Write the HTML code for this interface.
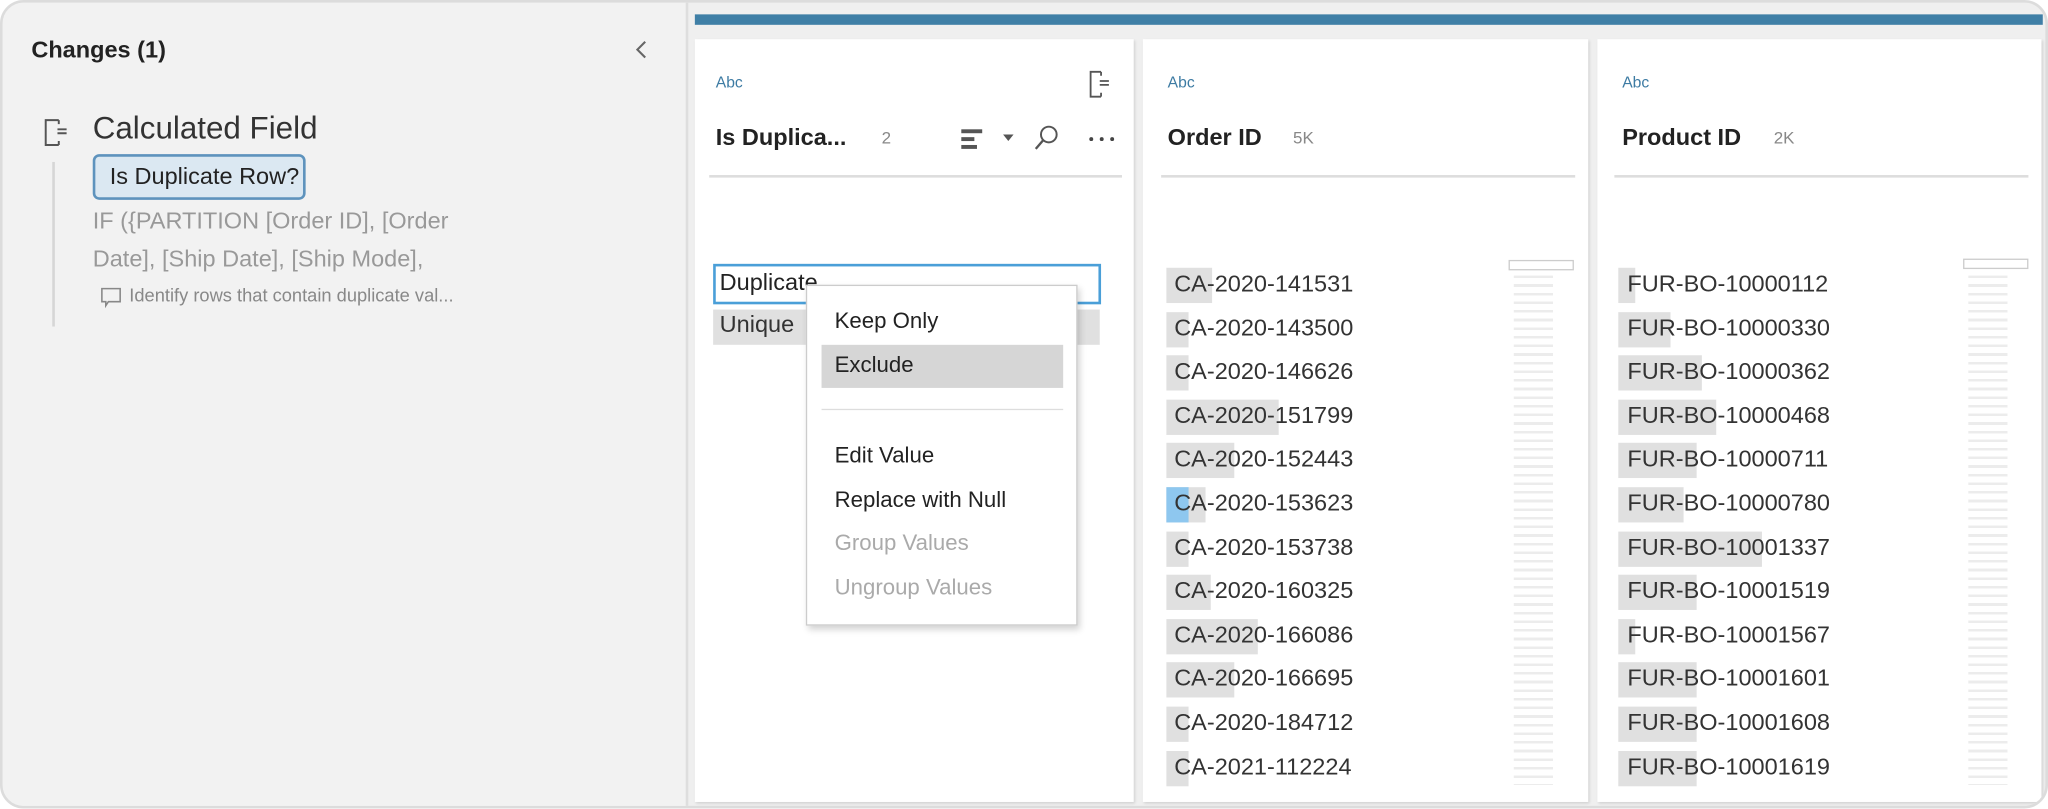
<!DOCTYPE html>
<html><head><meta charset="utf-8"><style>
*{margin:0;padding:0;box-sizing:border-box}
body{width:2048px;height:808px;overflow:hidden;background:#fff;font-family:"Liberation Sans Narrow","Liberation Sans",sans-serif}
#w{position:absolute;left:0;top:0;width:1568px;height:619px;transform:scale(1.30612);transform-origin:0 0}
.a{position:absolute}
#frame{left:0;top:0;width:1568px;height:619px;border:2px solid #dcdcdc;border-radius:18px;overflow:hidden;background:#efefef}
#left{left:0;top:0;width:525px;height:619px;background:#f2f2f2;border-right:2px solid #dedede}
.card{top:28px;height:584px;background:#fff;box-shadow:1px 1px 2px rgba(0,0,0,.12)}
.abc{font-size:12px;color:#3d7ba3}
.hdr{font-size:18px;font-weight:bold;color:#222}
.cnt{font-size:13px;color:#888}
.div{height:2px;background:#ddd}
.row{font-size:18px;color:#333;height:27px;line-height:27px}
.bar{background:#e0e0e0;height:27px}
.mi{font-size:17px;color:#222}
.mini{width:30px;background:repeating-linear-gradient(to bottom,#ececec 0 2px,transparent 2px 6.6px)}
</style></head><body><div id="w">
<div id="frame" class="a">
<div id="left" class="a">
 <div class="a" style="left:22px;top:26px;font-size:18px;font-weight:bold;color:#222">Changes (1)</div>
 <svg class="a" style="left:482px;top:27px" width="14" height="18"><path d="M10 3 L4 9 L10 15" fill="none" stroke="#666" stroke-width="1.6"/></svg>
 <svg class="a" style="left:30px;top:88px" width="22" height="24"><path d="M13 2 H3 V21 H13 M13 2 V5 M13 18 V21 M12 9 H19 M12 12 H19" fill="none" stroke="#555" stroke-width="1.5"/></svg>
 <div class="a" style="left:69px;top:83px;font-size:24px;color:#333">Calculated Field</div>
 <div class="a" style="left:38px;top:122px;width:2px;height:126px;background:#d6d6d6"></div>
 <div class="a" style="left:69px;top:116px;width:163px;height:35px;border:2px solid #5e93bd;border-radius:5px;background:#dbe8f2;font-size:18px;color:#222;line-height:31px;padding-left:11px">Is Duplicate Row?</div>
 <div class="a" style="left:69px;top:153px;font-size:18px;color:#999;line-height:29px">IF ({PARTITION [Order ID], [Order<br>Date], [Ship Date], [Ship Mode],</div>
 <svg class="a" style="left:74px;top:217px" width="18" height="18"><path d="M2 2 H16 V12 H7 L5 15 V12 H2 Z" fill="none" stroke="#888" stroke-width="1.2"/></svg>
 <div class="a" style="left:97px;top:216px;font-size:14px;color:#888">Identify rows that contain duplicate val...</div>
</div>
<div class="a" style="left:530px;top:9px;width:1032px;height:8px;background:#3f7fa6"></div>

<!-- card1 -->
<div class="a card" style="left:530px;width:336px"></div>
<div class="a abc" style="left:546px;top:54px">Abc</div>
<svg class="a" style="left:830px;top:51px" width="22" height="24"><path d="M11 2 H3 V21 H11 M11 2 V5 M11 18 V21 M10 9 H17 M10 12 H17" fill="none" stroke="#555" stroke-width="1.4"/></svg>
<div class="a hdr" style="left:546px;top:93px">Is Duplica...</div>
<div class="a cnt" style="left:673px;top:96px">2</div>
<div class="a" style="left:734px;top:97px;width:16px;height:3px;background:#555"></div>
<div class="a" style="left:734px;top:103px;width:10px;height:3px;background:#555"></div>
<div class="a" style="left:734px;top:109px;width:12px;height:3px;background:#555"></div>
<div class="a" style="left:766px;top:101px;width:0;height:0;border-left:4px solid transparent;border-right:4px solid transparent;border-top:5px solid #555"></div>
<svg class="a" style="left:788px;top:92px" width="22" height="24"><circle cx="13" cy="9" r="6" fill="none" stroke="#555" stroke-width="1.5"/><path d="M9 13 L3 20" stroke="#555" stroke-width="1.8"/></svg>
<div class="a" style="left:832px;top:103px;width:3px;height:3px;background:#444;border-radius:50%"></div>
<div class="a" style="left:840px;top:103px;width:3px;height:3px;background:#444;border-radius:50%"></div>
<div class="a" style="left:848px;top:103px;width:3px;height:3px;background:#444;border-radius:50%"></div>
<div class="a div" style="left:541px;top:132px;width:316px"></div>
<div class="a" style="left:544px;top:235px;width:296px;height:27px;background:#e0e0e0"></div>
<div class="a" style="left:549px;top:236px;font-size:18px;color:#333">Unique</div>
<div class="a" style="left:544px;top:200px;width:297px;height:31px;border:2px solid #4a9fd8;background:#fff"></div>
<div class="a" style="left:549px;top:204px;font-size:18px;color:#222">Duplicate</div>
<div class="a" style="left:615px;top:216px;width:208px;height:261px;background:#fff;border:1px solid #ccc;box-shadow:2px 3px 5px rgba(0,0,0,.18)"></div>
<div class="a" style="left:627px;top:262px;width:185px;height:33px;background:#d6d6d6"></div>
<div class="a mi" style="left:637px;top:234px">Keep Only</div>
<div class="a mi" style="left:637px;top:268px">Exclude</div>
<div class="a" style="left:627px;top:311px;width:185px;height:1px;background:#ddd"></div>
<div class="a mi" style="left:637px;top:337px">Edit Value</div>
<div class="a mi" style="left:637px;top:371px">Replace with Null</div>
<div class="a mi" style="left:637px;top:404px;color:#aaa">Group Values</div>
<div class="a mi" style="left:637px;top:438px;color:#aaa">Ungroup Values</div>

<!-- card2 -->
<div class="a card" style="left:873px;width:341px"></div>
<div class="a abc" style="left:892px;top:54px">Abc</div>
<div class="a hdr" style="left:892px;top:93px">Order ID</div>
<div class="a cnt" style="left:988px;top:96px">5K</div>
<div class="a div" style="left:887px;top:132px;width:317px"></div>
<div class="a" style="left:1153px;top:197px;width:50px;height:8px;border:1.5px solid #ccc"></div>
<div class="a mini" style="left:1157px;top:209px;height:390px"></div>
<div class="a" style="left:891px;top:203px">
 <div style="position:relative">
 <div class="a bar" style="top:0;width:35px"></div>
 <div class="a bar" style="top:33.6px;width:17px"></div>
 <div class="a bar" style="top:67.2px;width:17px"></div>
 <div class="a bar" style="top:100.8px;width:86px"></div>
 <div class="a bar" style="top:134.4px;width:52px"></div>
 <div class="a bar" style="top:168px;width:30px"></div>
 <div class="a" style="top:168px;width:17px;height:27px;background:#8ec7ef"></div>
 <div class="a bar" style="top:201.6px;width:17px"></div>
 <div class="a bar" style="top:235.2px;width:34px"></div>
 <div class="a bar" style="top:268.8px;width:70px"></div>
 <div class="a bar" style="top:302.4px;width:52px"></div>
 <div class="a bar" style="top:336px;width:17px"></div>
 <div class="a bar" style="top:369.6px;width:17px"></div>
 </div>
</div>
<div class="a" style="left:897px;top:199px;line-height:33.6px;font-size:18px;color:#333">CA-2020-141531<br>CA-2020-143500<br>CA-2020-146626<br>CA-2020-151799<br>CA-2020-152443<br>CA-2020-153623<br>CA-2020-153738<br>CA-2020-160325<br>CA-2020-166086<br>CA-2020-166695<br>CA-2020-184712<br>CA-2021-112224</div>

<!-- card3 -->
<div class="a card" style="left:1221px;width:340px"></div>
<div class="a abc" style="left:1240px;top:54px">Abc</div>
<div class="a hdr" style="left:1240px;top:93px">Product ID</div>
<div class="a cnt" style="left:1356px;top:96px">2K</div>
<div class="a div" style="left:1234px;top:132px;width:317px"></div>
<div class="a" style="left:1501px;top:196px;width:50px;height:8px;border:1.5px solid #ccc"></div>
<div class="a mini" style="left:1505px;top:209px;height:390px"></div>
<div class="a" style="left:1237px;top:203px">
 <div style="position:relative">
 <div class="a bar" style="top:0;width:13px"></div>
 <div class="a bar" style="top:33.6px;width:40px"></div>
 <div class="a bar" style="top:67.2px;width:64px"></div>
 <div class="a bar" style="top:100.8px;width:75px"></div>
 <div class="a bar" style="top:134.4px;width:60px"></div>
 <div class="a bar" style="top:168px;width:50px"></div>
 <div class="a bar" style="top:201.6px;width:110px"></div>
 <div class="a bar" style="top:235.2px;width:60px"></div>
 <div class="a bar" style="top:268.8px;width:13px"></div>
 <div class="a bar" style="top:302.4px;width:60px"></div>
 <div class="a bar" style="top:336px;width:60px"></div>
 <div class="a bar" style="top:369.6px;width:60px"></div>
 </div>
</div>
<div class="a" style="left:1244px;top:199px;line-height:33.6px;font-size:18px;color:#333">FUR-BO-10000112<br>FUR-BO-10000330<br>FUR-BO-10000362<br>FUR-BO-10000468<br>FUR-BO-10000711<br>FUR-BO-10000780<br>FUR-BO-10001337<br>FUR-BO-10001519<br>FUR-BO-10001567<br>FUR-BO-10001601<br>FUR-BO-10001608<br>FUR-BO-10001619</div>
</div>
</div></body></html>
